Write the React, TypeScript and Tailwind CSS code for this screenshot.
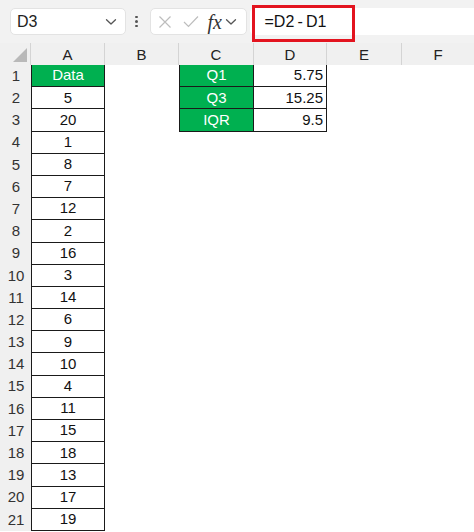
import React from 'react';

const cols = ['A', 'B', 'C', 'D', 'E', 'F'];
const colWidths = ['w-[74px]', 'w-[74px]', 'w-[75px]', 'w-[73px]', 'w-[75px]', 'flex-1'];
const data = [5, 20, 1, 8, 7, 12, 2, 16, 3, 14, 6, 9, 10, 4, 11, 15, 18, 13, 17, 19];
const stats: [string, string][] = [
  ['Q1', '5.75'],
  ['Q3', '15.25'],
  ['IQR', '9.5'],
];

const Chevron = ({ className = '' }: { className?: string }) => (
  <svg className={className} width="12" height="8" viewBox="0 0 12 8" fill="none">
    <path d="M1.5 1.8 L6 6 L10.5 1.8" stroke="#555" strokeWidth="1.3" strokeLinecap="round" strokeLinejoin="round" />
  </svg>
);

function Toolbar() {
  return (
    <div className="h-[43px] bg-[#f2f2f2] flex items-center relative">
      {/* name box */}
      <div className="ml-[10px] w-[116px] h-[27px] bg-white rounded-[5px] border border-[#e3e3e3] flex items-center justify-between pl-[6px] pr-[8px]">
        <span className="text-[16px] text-[#222]">D3</span>
        <Chevron />
      </div>
      {/* dots */}
      <div className="ml-[9px] flex flex-col gap-[2px]">
        <span className="w-[2.5px] h-[2.5px] bg-[#555] rounded-full" />
        <span className="w-[2.5px] h-[2.5px] bg-[#555] rounded-full" />
        <span className="w-[2.5px] h-[2.5px] bg-[#555] rounded-full" />
      </div>
      {/* fx box */}
      <div className="ml-[12px] w-[97px] h-[27px] bg-white rounded-[5px] border border-[#e3e3e3] flex items-center pl-[7px]">
        <svg width="14" height="14" viewBox="0 0 14 14">
          <path d="M1.5 1.5 L12.5 12.5 M12.5 1.5 L1.5 12.5" stroke="#bdbdbd" strokeWidth="1.2" />
        </svg>
        <svg className="ml-[11px]" width="16" height="13" viewBox="0 0 16 13">
          <path d="M1 7 L5.5 11.5 L15 1.5" stroke="#bdbdbd" strokeWidth="1.2" fill="none" />
        </svg>
        <span
          className="ml-[9px] text-[20px] leading-none italic text-[#333]"
          style={{ fontFamily: '"Liberation Serif", serif' }}
        >
          fx
        </span>
        <Chevron className="ml-[3px]" />
      </div>
      {/* formula field */}
      <div className="ml-[3px] flex-1 h-[27px] bg-white rounded-l-[5px] flex items-center pl-[15px]">
        <span className="text-[16px] text-[#111]">=D2{'\u2009'}-{'\u2009'}D1</span>
      </div>
      <div className="absolute left-[252px] top-[5px] w-[103px] h-[37px] border-[3px] border-[#e3141f]" />
    </div>
  );
}

function HeaderRow() {
  return (
    <div className="h-[22px] bg-[#f0f0f0] flex">
      <div className="w-[31px] relative border-r border-[#d4d4d4]">
        <svg className="absolute right-[3px] bottom-[3px]" width="14" height="14" viewBox="0 0 14 14">
          <path d="M14 0 L14 14 L0 14 Z" fill="#b9b9b9" />
        </svg>
      </div>
      {cols.map((c, i) => (
        <div
          key={c}
          className={`${colWidths[i]} flex items-center justify-center text-[15px] text-[#222] pt-[2px] ${
            i < cols.length - 1 ? 'border-r border-[#d4d4d4]' : ''
          }`}
        >
          {c}
        </div>
      ))}
    </div>
  );
}

function Row({ n }: { n: number }) {
  const a = n === 1 ? 'Data' : String(data[n - 2]);
  const stat = n <= 3 ? stats[n - 1] : null;
  return (
    <div className="h-[22.2px] flex">
      <div className="w-[31px] bg-[#f0f0f0] flex items-center justify-center text-[15px] text-[#333] pl-[1px]">{n}</div>
      <div
        className={`w-[74px] flex items-center justify-center text-[15px] border-x border-b border-[#1a1a1a] ${
          n === 1 ? 'bg-[#00b050] text-white' : 'bg-white text-[#111]'
        }`}
      >
        {a}
      </div>
      <div className="w-[74px]" />
      {stat ? (
        <>
          <div className="w-[75px] flex items-center justify-center text-[15px] text-white bg-[#00b050] border-x border-b border-[#1a1a1a]">
            {stat[0]}
          </div>
          <div className="w-[73px] flex items-center justify-end pr-[3px] text-[15px] text-[#111] bg-white border-r border-b border-[#1a1a1a]">
            {stat[1]}
          </div>
        </>
      ) : (
        <div className="w-[148px]" />
      )}
      <div className="flex-1" />
    </div>
  );
}

export default function App() {
  const rows = Array.from({ length: 21 }, (_, i) => i + 1);
  return (
    <div
      className="w-[474px] h-[532px] overflow-hidden bg-white"
      style={{ fontFamily: '"Liberation Sans", Arial, sans-serif' }}
    >
      <Toolbar />
      <HeaderRow />
      {rows.map((n) => (
        <Row key={n} n={n} />
      ))}
    </div>
  );
}
